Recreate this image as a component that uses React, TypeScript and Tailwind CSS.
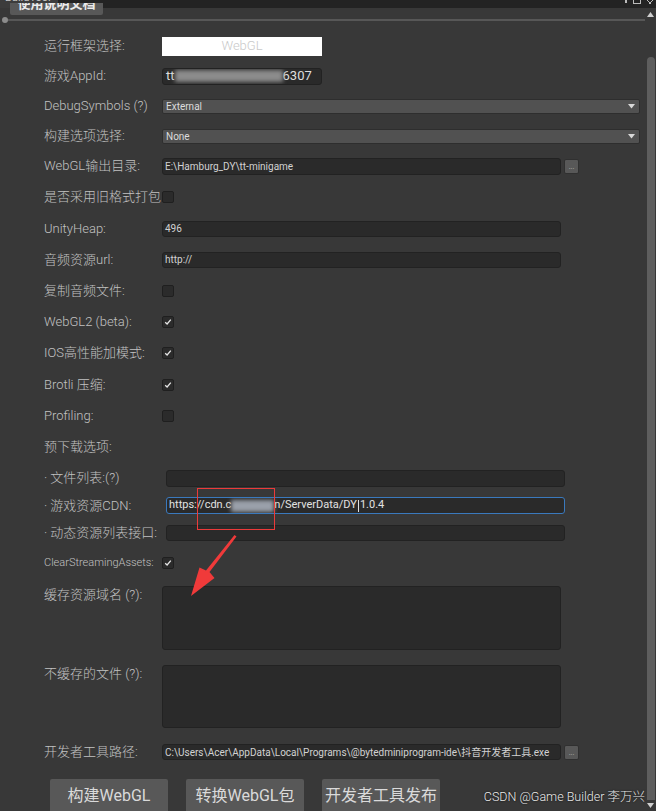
import React from 'react';

const font = "font-['Roboto','Noto_Sans_CJK_SC',sans-serif]";

function Label({ children, wide = false, small = false }: { children: React.ReactNode; wide?: boolean; small?: boolean }) {
  return (
    <div
      className={`${wide ? 'w-[122px]' : 'w-[118px]'} shrink-0 whitespace-nowrap font-light ${small ? 'text-[11px]' : 'text-[13px]'} leading-[18px] text-[#c2c2c2]`}
    >
      {children}
    </div>
  );
}

function Field({ children, h = 'h-[17px]', w = 'w-[399px]', blue = false }: { children?: React.ReactNode; h?: string; w?: string; blue?: boolean }) {
  return (
    <div
      className={`${w} ${h} flex items-center overflow-hidden whitespace-nowrap rounded-[3px] border ${blue ? 'border-[#3a79bd]' : 'border-[#222222]'} bg-[#2a2a2a] px-[2px] text-[10px] text-[#d2d2d2]`}
    >
      {children}
    </div>
  );
}

function Check({ on = false }: { on?: boolean }) {
  return (
    <div className="flex h-[12px] w-[12px] items-center justify-center rounded-[2px] border border-[#1f1f1f] bg-[#2b2b2b]">
      {on && (
        <svg width="8" height="8" viewBox="0 0 8 8">
          <path d="M1.2 4.2 L3.1 6 L6.8 1.6" fill="none" stroke="#e6e6e6" strokeWidth="1.3" />
        </svg>
      )}
    </div>
  );
}

function Dropdown({ value }: { value: string }) {
  return (
    <div className="flex h-[15px] w-[478px] items-center justify-between rounded-[2px] border border-[#2e2e2e] bg-[#515151] pl-[3px] pr-[4px] text-[10px] text-[#dcdcdc]">
      <span>{value}</span>
      <svg width="7" height="5" viewBox="0 0 7 5">
        <path d="M0 0 H7 L3.5 4.5 Z" fill="#d8d8d8" />
      </svg>
    </div>
  );
}

function Dots() {
  return (
    <div className="ml-[3px] flex h-[15px] w-[15px] items-end justify-center rounded-[2px] border border-[#303030] bg-[#585858] pb-[2px] text-[7px] leading-[7px] text-[#bbbbbb]">
      ...
    </div>
  );
}

function Blur({ w, color = 'bg-[#8c8c8c]' }: { w: string; color?: string }) {
  return <span className={`inline-block ${w} h-[12px] ${color} blur-[2px]`} />;
}

export default function App() {
  return (
    <div className={`relative flex h-[811px] w-[656px] overflow-hidden bg-[#383838] ${font}`}>
      <div className="flex w-[645px] flex-col">
        {/* window header, cropped */}
        <div className="flex h-[31px] shrink-0 flex-col">
          <div className="flex h-[8px] bg-[#232323]">
            <div className="w-[58px] overflow-hidden bg-[#3c3c3c] pl-[5px]">
              <div className="-mt-[8px] text-[11px] leading-[11px] text-[#c8c8c8]">BuildTool</div>
            </div>
            <div className="flex-1" />
          </div>
          <div className="relative -mt-[5px] ml-[10px] h-[12px] w-[93px] overflow-hidden rounded-b-[2px] bg-[#585858] text-center">
            <div className="-mt-[6px] text-[13px] font-bold leading-[14px] text-[#ececec]">使用说明文档</div>
          </div>
          <div className="mt-[2px] flex h-[6px] items-center">
            <div className="ml-[2px] h-[6px] w-[6px] rounded-full bg-[#8c8c8c]" />
            <div className="h-[2px] flex-1 bg-[#575757]" />
          </div>
        </div>

        <div className="flex shrink-0 flex-col pl-[44px]">
          <div className="flex h-[30px] items-center">
            <Label>运行框架选择:</Label>
            <div className="flex h-[19px] w-[160px] items-center justify-center bg-white text-[13px] font-light text-[#c9c9c9]">WebGL</div>
          </div>
          <div className="flex h-[30px] items-center">
            <Label>游戏AppId:</Label>
            <Field w="w-[160px]" h="h-[17px]">
              <span className="pl-[1px] text-[13px] text-[#dedede]">tt</span>
              <Blur w="w-[108px]" />
              <span className="text-[13px] text-[#dedede]">6307</span>
            </Field>
          </div>
          <div className="flex h-[30px] items-center">
            <Label>DebugSymbols (?)</Label>
            <Dropdown value="External" />
          </div>
          <div className="flex h-[30px] items-center">
            <Label>构建选项选择:</Label>
            <Dropdown value="None" />
          </div>
          <div className="flex h-[30px] items-center">
            <Label>WebGL输出目录:</Label>
            <Field>E:\Hamburg_DY\tt-minigame</Field>
            <Dots />
          </div>
          <div className="flex h-[32px] items-center">
            <Label>是否采用旧格式打包</Label>
            <Check />
          </div>
          <div className="flex h-[31px] items-center">
            <Label>UnityHeap:</Label>
            <Field h="h-[16px]">496</Field>
          </div>
          <div className="flex h-[31px] items-center">
            <Label>音频资源url:</Label>
            <Field h="h-[16px]">http://</Field>
          </div>
          <div className="flex h-[31px] items-center">
            <Label>复制音频文件:</Label>
            <Check />
          </div>
          <div className="flex h-[31px] items-center">
            <Label>WebGL2 (beta):</Label>
            <Check on />
          </div>
          <div className="flex h-[32px] items-center">
            <Label>IOS高性能加模式:</Label>
            <Check on />
          </div>
          <div className="flex h-[31px] items-center">
            <Label>Brotli 压缩:</Label>
            <Check on />
          </div>
          <div className="flex h-[31px] items-center">
            <Label>Profiling:</Label>
            <Check />
          </div>
          <div className="flex h-[31px] items-center">
            <Label>预下载选项:</Label>
          </div>
          <div className="flex h-[32px] items-center">
            <Label wide>· 文件列表:(?)</Label>
            <Field />
          </div>
          <div className="flex h-[23px] items-center">
            <Label wide>· 游戏资源CDN:</Label>
            <Field blue>
              <span className="text-[11px] text-[#e2e2e2]">https://cdn.c</span>
              <Blur w="w-[43px]" color="bg-[#9aa0aa]" />
              <span className="text-[11px] text-[#e2e2e2]">n/ServerData/DY</span>
              <span className="mx-[1px] h-[12px] w-px bg-[#e2e2e2]" />
              <span className="text-[11px] text-[#e2e2e2]">1.0.4</span>
            </Field>
          </div>
          <div className="flex h-[31px] items-center">
            <Label wide>· 动态资源列表接口:</Label>
            <Field h="h-[16px]" />
          </div>
          <div className="flex h-[30px] items-center">
            <Label small>ClearStreamingAssets:</Label>
            <Check on />
          </div>
          <div className="flex h-[80px] items-start pt-[8px]">
            <div className="w-[118px] shrink-0 text-[13px] font-light leading-[17px] text-[#c2c2c2]">缓存资源域名 (?):</div>
            <div className="h-[64px] w-[399px] rounded-[3px] border border-[#222222] bg-[#2a2a2a]" />
          </div>
          <div className="flex h-[78px] items-start pt-[7px]">
            <div className="w-[118px] shrink-0 text-[13px] font-light leading-[18px] text-[#c2c2c2]">不缓存的文件 (?):</div>
            <div className="h-[63px] w-[399px] rounded-[3px] border border-[#222222] bg-[#2a2a2a]" />
          </div>
          <div className="flex h-[32px] items-center">
            <Label>开发者工具路径:</Label>
            <Field h="h-[16px]">C:\Users\Acer\AppData\Local\Programs\@bytedminiprogram-ide\抖音开发者工具.exe</Field>
            <Dots />
          </div>
        </div>

        <div className="mt-[11px] flex shrink-0 items-start gap-[18px] pl-[50px]">
          <div className="flex h-[34px] w-[118px] items-center justify-center rounded-[2px] bg-[#585858] text-[16px] text-[#dadada]">构建WebGL</div>
          <div className="flex h-[34px] w-[118px] items-center justify-center rounded-[2px] bg-[#585858] text-[16px] text-[#dadada]">转换WebGL包</div>
          <div className="flex h-[34px] w-[118px] items-center justify-center rounded-[2px] bg-[#585858] text-[16px] text-[#dadada]">开发者工具发布</div>
          <div className="ml-auto mt-[9px] whitespace-nowrap text-[12.5px] font-light text-[#ececec] [text-shadow:0_0_2px_#000]">
            CSDN @Game Builder 李万兴
          </div>
        </div>
      </div>

      {/* scrollbar */}
      <div className="flex w-[11px] flex-col items-center">
        <div className="h-[8px] w-full shrink-0 bg-[#232323]" />
        <svg className="mt-[4px] shrink-0" width="7" height="5" viewBox="0 0 7 5">
          <path d="M3.5 0 L7 5 H0 Z" fill="#cfcfcf" />
        </svg>
        <div className="mt-[40px] w-[8px] flex-1 rounded-t-[4px] bg-[#5e5e5e]" />
        <svg className="my-[3px] shrink-0" width="7" height="5" viewBox="0 0 7 5">
          <path d="M0 0 H7 L3.5 5 Z" fill="#cfcfcf" />
        </svg>
      </div>

      {/* top-right window icons, cropped */}
      <div className="absolute right-[3px] top-0 flex items-start gap-[6px]">
        <div className="h-[3px] w-[2px] bg-[#bbbbbb]" />
        <div className="h-[4px] w-[8px] border border-t-0 border-[#bbbbbb]" />
        <svg width="6" height="4" viewBox="0 0 6 4">
          <path d="M0 0 L4 4 M6 0 L2 4" stroke="#bbbbbb" strokeWidth="1" />
        </svg>
      </div>

      {/* red annotation */}
      <div className="absolute left-[197px] top-[488px] h-[42px] w-[78px] border border-[#ec3a3a]" />
      <svg className="pointer-events-none absolute left-0 top-0" width="656" height="811" viewBox="0 0 656 811">
        <polygon
          points="234.5,535 236.5,536.5 209.5,572 214.5,578 191,596 199.5,567.5 206,570.5"
          fill="#f03a3a"
        />
      </svg>
    </div>
  );
}
